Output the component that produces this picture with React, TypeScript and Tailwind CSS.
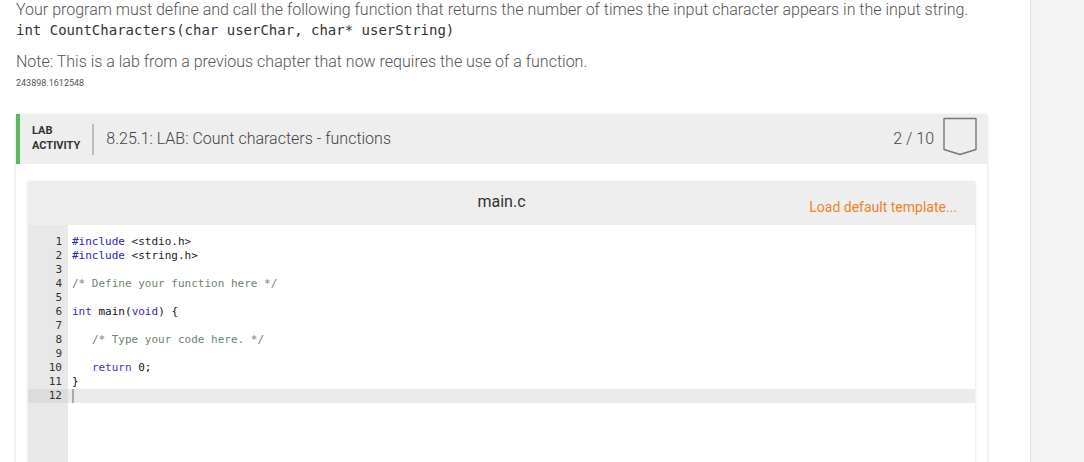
import React from 'react';

const codeLines: React.ReactNode[] = [
  <><span className="text-[#2424c8]">#include</span> <span className="text-[#222]">&lt;stdio.h&gt;</span></>,
  <><span className="text-[#2424c8]">#include</span> <span className="text-[#222]">&lt;string.h&gt;</span></>,
  <></>,
  <span className="text-[#6e8470]">/* Define your function here */</span>,
  <></>,
  <><span className="text-[#3a22c8]">int</span> main(<span className="text-[#3a22c8]">void</span>) {'{'}</>,
  <></>,
  <>   <span className="text-[#6e8470]">/* Type your code here. */</span></>,
  <></>,
  <>   <span className="text-[#5a2ad0]">return</span> 0;</>,
  <>{'}'}</>,
  <><span className="inline-block w-[2px] h-[14px] bg-[#aaaaaa] align-top" /></>,
];

const ACTIVE = 11;

const App: React.FC = () => {
  return (
    <div className="flex h-screen overflow-hidden bg-white font-['Roboto',sans-serif]">
      {/* Main content */}
      <main className="w-[1030px] shrink-0 pl-4">
        <p className="text-[16px] leading-[20px] font-light text-[#555]">
          Your program must define and call the following function that returns the number of times the input character appears in the input string.
        </p>
        <div className="font-['DejaVu_Sans_Mono',monospace] text-[14px] leading-[20px] text-[#333]">
          int CountCharacters(char userChar, char* userString)
        </div>
        <p className="mt-[12px] text-[16px] leading-[20px] font-light text-[#555]">
          Note: This is a lab from a previous chapter that now requires the use of a function.
        </p>
        <div className="mt-[5px] text-[9px] leading-[12px] text-[#555]">243898.1612548</div>

        {/* Lab card */}
        <div className="mt-[25px] w-[971px] shadow-[0_1px_3px_rgba(0,0,0,0.18)]">
          <div className="flex h-[50px] items-center border-l-4 border-[#5cb85c] bg-[#eeeeee] pl-3 pr-[10px]">
            <div className="mb-[3px] text-[11px] font-bold leading-[15px] text-[#333]">
              <div>LAB</div>
              <div>ACTIVITY</div>
            </div>
            <div className="ml-[12px] h-[31px] w-[2px] bg-[#bdbdbd]" />
            <div className="ml-[12px] text-[16px] font-light leading-[20px] text-[#444]">
              8.25.1: LAB: Count characters - functions
            </div>
            <div className="ml-auto text-[16px] font-light leading-[20px] text-[#444]">2 / 10</div>
            <svg className="mb-[4px] ml-[9px]" width="34" height="40" viewBox="0 0 34 40" fill="none">
              <path d="M1 1.5H33V32.5L17 37.5L1 32.5Z" stroke="#777" strokeWidth="1.4" strokeLinejoin="round" />
            </svg>
          </div>

          <div className="bg-white px-[12px] pt-[17px]">
            <div className="shadow-[0_1px_3px_rgba(0,0,0,0.15)]">
              {/* Editor header */}
              <div className="grid h-[44px] grid-cols-[1fr_auto_1fr] bg-[#eeeeee]">
                <div />
                <div className="pt-[11px] text-[16px] leading-[20px] text-[#333]">main.c</div>
                <div className="pr-[18px] pt-[16px] text-right text-[14px] leading-[20px] text-[#f5841f]">
                  Load default template...
                </div>
              </div>

              {/* Code area */}
              <div className="flex h-[320px] bg-white font-['DejaVu_Sans_Mono',monospace] text-[11px] leading-[14px]">
                <div className="w-[40px] shrink-0 bg-[#e8e8e8] pt-[10px] text-[#333]">
                  {codeLines.map((_, i) => (
                    <div key={i} className={`h-[14px] pr-[6px] text-right ${i === ACTIVE ? 'bg-[#dcdcdc]' : ''}`}>
                      {i + 1}
                    </div>
                  ))}
                </div>
                <div className="flex-1 pt-[10px] text-[#111]">
                  {codeLines.map((line, i) => (
                    <div key={i} className={`h-[14px] whitespace-pre pl-[4px] ${i === ACTIVE ? 'bg-[#ebebeb]' : ''}`}>
                      {line}
                    </div>
                  ))}
                </div>
              </div>
            </div>
          </div>
        </div>
      </main>

      {/* Right side panel */}
      <aside className="flex-1 border-l border-[#e6e6e6] bg-[#f3f3f3]" />
    </div>
  );
};

export default App;
